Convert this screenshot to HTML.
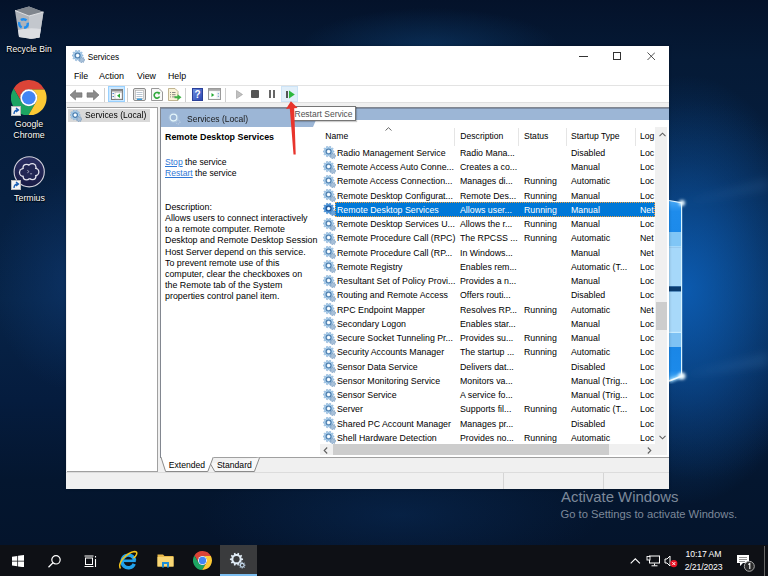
<!DOCTYPE html>
<html><head><meta charset="utf-8">
<style>
*{margin:0;padding:0;box-sizing:border-box}
html,body{width:768px;height:576px;overflow:hidden}
body{position:relative;font-family:"Liberation Sans",sans-serif;font-size:9px;color:#000;
background:
 radial-gradient(ellipse 130px 190px at 700px 290px, rgba(14,80,150,0.45), rgba(14,80,150,0) 100%),
 radial-gradient(ellipse 80px 110px at 72px 280px, rgba(16,62,124,0.5), rgba(16,62,124,0) 100%),
 radial-gradient(ellipse 130px 40px at 430px 48px, rgba(14,62,112,0.55), rgba(14,62,112,0) 100%),
 radial-gradient(ellipse 200px 60px at 400px 515px, rgba(12,55,110,0.35), rgba(12,55,110,0) 100%),
 linear-gradient(180deg,#04122a 0px,#051a36 60px,#061f40 200px,#072448 300px,#051c3e 400px,#04162f 480px,#04142c 545px);
}
.abs{position:absolute}
.t{position:absolute;white-space:nowrap;line-height:1}
.desk{color:#fff;text-align:center;text-shadow:0 0 2px #000,0 1px 1px #000;font-size:9px}
</style></head><body>
<svg width="0" height="0" style="position:absolute"><defs><symbol id="gear" viewBox="0 0 13 13"><path d="M9.82 4.68 L10.97 4.94 L10.97 6.06 L9.82 6.32 L9.50 7.32 L10.27 8.20 L9.62 9.11 L8.53 8.64 L7.68 9.26 L7.79 10.44 L6.73 10.78 L6.13 9.77 L5.07 9.77 L4.47 10.78 L3.41 10.44 L3.52 9.26 L2.67 8.64 L1.58 9.11 L0.93 8.20 L1.70 7.32 L1.38 6.32 L0.23 6.06 L0.23 4.94 L1.38 4.68 L1.70 3.68 L0.93 2.80 L1.58 1.89 L2.67 2.36 L3.52 1.74 L3.41 0.56 L4.47 0.22 L5.07 1.23 L6.13 1.23 L6.73 0.22 L7.79 0.56 L7.68 1.74 L8.53 2.36 L9.62 1.89 L10.27 2.80 L9.50 3.68Z" fill="#a9cfec" stroke="#7aa5cf" stroke-width="0.5"/><path d="M11.92 9.33 L12.77 9.47 L12.77 10.33 L11.92 10.47 L11.60 11.13 L12.02 11.88 L11.35 12.41 L10.72 11.83 L10.00 12.00 L9.68 12.79 L8.84 12.60 L8.90 11.74 L8.32 11.29 L7.50 11.53 L7.13 10.76 L7.83 10.27 L7.83 9.53 L7.13 9.04 L7.50 8.27 L8.32 8.51 L8.90 8.06 L8.84 7.20 L9.68 7.01 L10.00 7.80 L10.72 7.97 L11.35 7.39 L12.02 7.92 L11.60 8.67Z" fill="#a8c0d8" stroke="#6a90b8" stroke-width="0.5"/><circle cx="5.6" cy="5.5" r="2.5" fill="none" stroke="#4a78a8" stroke-width="1.1"/><circle cx="5.6" cy="5.5" r="1.5" fill="#fff"/></symbol><symbol id="gears" viewBox="0 0 13 13"><path d="M9.82 4.68 L10.97 4.94 L10.97 6.06 L9.82 6.32 L9.50 7.32 L10.27 8.20 L9.62 9.11 L8.53 8.64 L7.68 9.26 L7.79 10.44 L6.73 10.78 L6.13 9.77 L5.07 9.77 L4.47 10.78 L3.41 10.44 L3.52 9.26 L2.67 8.64 L1.58 9.11 L0.93 8.20 L1.70 7.32 L1.38 6.32 L0.23 6.06 L0.23 4.94 L1.38 4.68 L1.70 3.68 L0.93 2.80 L1.58 1.89 L2.67 2.36 L3.52 1.74 L3.41 0.56 L4.47 0.22 L5.07 1.23 L6.13 1.23 L6.73 0.22 L7.79 0.56 L7.68 1.74 L8.53 2.36 L9.62 1.89 L10.27 2.80 L9.50 3.68Z" fill="#4d9ae0" stroke="#2f74bd" stroke-width="0.5"/><path d="M11.92 9.33 L12.77 9.47 L12.77 10.33 L11.92 10.47 L11.60 11.13 L12.02 11.88 L11.35 12.41 L10.72 11.83 L10.00 12.00 L9.68 12.79 L8.84 12.60 L8.90 11.74 L8.32 11.29 L7.50 11.53 L7.13 10.76 L7.83 10.27 L7.83 9.53 L7.13 9.04 L7.50 8.27 L8.32 8.51 L8.90 8.06 L8.84 7.20 L9.68 7.01 L10.00 7.80 L10.72 7.97 L11.35 7.39 L12.02 7.92 L11.60 8.67Z" fill="#6aa2d8" stroke="#3c78b8" stroke-width="0.5"/><circle cx="5.6" cy="5.5" r="2.5" fill="none" stroke="#1f4f8f" stroke-width="1.1"/><circle cx="5.6" cy="5.5" r="1.5" fill="#fff"/></symbol><symbol id="geart" viewBox="0 0 18 18"><path d="M12.60 6.21 L14.06 6.52 L14.06 7.88 L12.60 8.19 L12.21 9.40 L13.21 10.51 L12.41 11.61 L11.05 11.00 L10.02 11.75 L10.18 13.23 L8.88 13.65 L8.14 12.36 L6.86 12.36 L6.12 13.65 L4.82 13.23 L4.98 11.75 L3.95 11.00 L2.59 11.61 L1.79 10.51 L2.79 9.40 L2.40 8.19 L0.94 7.88 L0.94 6.52 L2.40 6.21 L2.79 5.00 L1.79 3.89 L2.59 2.79 L3.95 3.40 L4.98 2.65 L4.82 1.17 L6.12 0.75 L6.86 2.04 L8.14 2.04 L8.88 0.75 L10.18 1.17 L10.02 2.65 L11.05 3.40 L12.41 2.79 L13.21 3.89 L12.21 5.00Z" fill="#dfeaf4"/><circle cx="7.5" cy="7.2" r="3.1" fill="#3a3b3d"/><path d="M15.73 12.58 L16.67 12.75 L16.67 13.65 L15.73 13.82 L15.42 14.55 L15.97 15.33 L15.33 15.97 L14.55 15.42 L13.82 15.73 L13.65 16.67 L12.75 16.67 L12.58 15.73 L11.85 15.42 L11.07 15.97 L10.43 15.33 L10.98 14.55 L10.67 13.82 L9.73 13.65 L9.73 12.75 L10.67 12.58 L10.98 11.85 L10.43 11.07 L11.07 10.43 L11.85 10.98 L12.58 10.67 L12.75 9.73 L13.65 9.73 L13.82 10.67 L14.55 10.98 L15.33 10.43 L15.97 11.07 L15.42 11.85Z" fill="#c6dcf0" stroke="#3a3b3d" stroke-width="0.4"/><circle cx="13.2" cy="13.2" r="1.2" fill="#3a3b3d"/></symbol></defs></svg>

<!-- Desktop icons -->
<div id="desktop">
  <!-- recycle bin -->
  <svg class="abs" style="left:13px;top:5px" width="32" height="36" viewBox="0 0 32 36">
    <path d="M2 5.5 L16 1.5 L30.5 7 L26.5 32.5 Q20 34 16 33.5 L6 32 Z" fill="#aeb3ba"/>
    <path d="M16 11 L30.5 7 L26.5 32.5 Q20 34 16 33.5 Z" fill="#c3c7cd"/>
    <path d="M2 5.5 L16 1.5 L30.5 7 L16 11 Z" fill="#80868e"/>
    <path d="M2 5.5 L16 11 L30.5 7" fill="none" stroke="#e6e8ea" stroke-width="0.9"/>
    <path d="M5 25 Q16 22 27.8 24 L26.5 32.5 Q20 34 16 33.5 L6 32 Z" fill="#dcdee2"/>
    <circle cx="10.5" cy="18.5" r="4.3" fill="none" stroke="#1e8ef0" stroke-width="2.4" stroke-dasharray="6 2.5"/>
  </svg>
  <div class="t desk" style="left:5.5px;top:44.5px;width:47px;font-size:8.6px">Recycle Bin</div>

  <!-- chrome -->
  <svg class="abs" style="left:11.4px;top:79.6px" width="35.6" height="35.6" viewBox="0 0 36 36">
    <path d="M18 9.5 L33.87 9.5 A18 18 0 0 0 2.70 8.51 L10.64 22.25 A8.5 8.5 0 0 1 18 9.5 Z" fill="#db4437"/>
    <path d="M10.64 22.25 L2.70 8.51 A18 18 0 0 0 17.43 35.99 L25.36 22.25 A8.5 8.5 0 0 1 10.64 22.25 Z" fill="#1da462"/>
    <path d="M25.36 22.25 L17.43 35.99 A18 18 0 0 0 33.87 9.5 L18 9.5 A8.5 8.5 0 0 1 25.36 22.25 Z" fill="#fcc934"/>
    <circle cx="18" cy="18" r="8.6" fill="#fff"/>
    <circle cx="18" cy="18" r="6.9" fill="#4285f4"/>
  </svg>
  <div class="abs" style="left:11px;top:106px;width:10px;height:10px;background:#f4f4f4;border:1px solid #bbb"></div>
  <svg class="abs" style="left:12px;top:107px" width="8" height="8" viewBox="0 0 8 8"><path d="M2 7 Q2 3 6 3 M4 1 L6.5 3 L4 5" fill="none" stroke="#1a5fb4" stroke-width="1.3"/></svg>
  <div class="t desk" style="left:4px;top:119.7px;width:50px;font-size:8.8px">Google</div>
  <div class="t desk" style="left:4px;top:130.7px;width:50px;font-size:8.8px">Chrome</div>

  <!-- termius -->
  <svg class="abs" style="left:13px;top:155px" width="33" height="33" viewBox="0 0 33 33">
    <defs><linearGradient id="tg" x1="0" y1="0" x2="0" y2="1"><stop offset="0" stop-color="#2a2e62"/><stop offset="1" stop-color="#181b44"/></linearGradient></defs>
    <circle cx="16.2" cy="16.8" r="15.1" fill="url(#tg)" stroke="#d2d2dc" stroke-width="1.1"/>
    <circle cx="10.5" cy="17.5" r="4.60" fill="#e4e4ee"/><circle cx="13.5" cy="12.8" r="4.10" fill="#e4e4ee"/><circle cx="19.2" cy="12.3" r="4.40" fill="#e4e4ee"/><circle cx="22.3" cy="17.0" r="4.20" fill="#e4e4ee"/><circle cx="19.5" cy="21.3" r="4.00" fill="#e4e4ee"/><circle cx="13.5" cy="21.6" r="4.00" fill="#e4e4ee"/><circle cx="16.3" cy="17.0" r="4.70" fill="#e4e4ee"/><circle cx="10.5" cy="17.5" r="3.30" fill="#232754"/><circle cx="13.5" cy="12.8" r="2.80" fill="#232754"/><circle cx="19.2" cy="12.3" r="3.10" fill="#232754"/><circle cx="22.3" cy="17.0" r="2.90" fill="#232754"/><circle cx="19.5" cy="21.3" r="2.70" fill="#232754"/><circle cx="13.5" cy="21.6" r="2.70" fill="#232754"/><circle cx="16.3" cy="17.0" r="3.40" fill="#232754"/>
    <circle cx="16.3" cy="17" r="6.2" fill="#232754"/><ellipse cx="16.3" cy="17" rx="7.5" ry="4.5" fill="#232754"/><path d="M14.3 15.3 L16.1 16.6 L14.3 17.8 M17.1 18.8 L19.1 18.8" stroke="#a8aac0" stroke-width="0.9" fill="none"/>
  </svg>
  <div class="abs" style="left:11px;top:180px;width:10px;height:10px;background:#f4f4f4;border:1px solid #bbb"></div>
  <svg class="abs" style="left:12px;top:181px" width="8" height="8" viewBox="0 0 8 8"><path d="M2 7 Q2 3 6 3 M4 1 L6.5 3 L4 5" fill="none" stroke="#1a5fb4" stroke-width="1.3"/></svg>
  <div class="t desk" style="left:4px;top:193.6px;width:51px;font-size:8.8px">Termius</div>
</div>

<!-- Windows logo light -->
<div class="abs" style="left:662px;top:46px;width:106px;height:499px;background:radial-gradient(ellipse 130px 215px at 24px 244px, rgba(12,96,186,0.85), rgba(12,90,176,0.32) 60%, rgba(12,80,160,0) 100%)"></div>
<div id="logo" class="abs" style="left:600px;top:150px;width:168px;height:280px;overflow:hidden">
  <svg class="abs" style="left:0;top:0" width="168" height="280" viewBox="600 150 168 280">
    <defs>
      <filter id="bl" x="-50%" y="-50%" width="200%" height="200%"><feGaussianBlur stdDeviation="1.6"/></filter>
      <filter id="bl2" x="-50%" y="-50%" width="200%" height="200%"><feGaussianBlur stdDeviation="4"/></filter>
      <linearGradient id="p1" x1="0" y1="0" x2="0" y2="1"><stop offset="0" stop-color="#48a8f6"/><stop offset="0.35" stop-color="#1e8cec"/><stop offset="1" stop-color="#1c8aea"/></linearGradient>
      <linearGradient id="p4" x1="0" y1="0" x2="0" y2="1"><stop offset="0" stop-color="#1a86e6"/><stop offset="0.7" stop-color="#1c8aea"/><stop offset="1" stop-color="#50b0f8"/></linearGradient>
    </defs>
    <!-- rays -->
    <path d="M682 203 L768 178 L768 190 Z" fill="rgba(110,180,240,0.10)" filter="url(#bl2)"/>
    <path d="M682 376 L768 352 L768 366 Z" fill="rgba(110,180,240,0.12)" filter="url(#bl2)"/>
    <!-- panes -->
    <path d="M669 200.5 L682 202.8 L682 232 L669 232 Z" fill="url(#p1)"/>
    <rect x="669" y="232" width="13" height="15" fill="#80c6f6"/>
    <rect x="669" y="246.5" width="13" height="1.2" fill="#c8ecff"/>
    <rect x="669" y="247.5" width="13" height="39" fill="#a6d8fa"/>
    <rect x="669" y="286.5" width="13" height="5" fill="#0a3c70"/>
    <rect x="669" y="291.5" width="13" height="41" fill="#a8d9fa"/>
    <rect x="669" y="331.8" width="13" height="1.2" fill="#c8ecff"/>
    <rect x="669" y="333" width="13" height="14" fill="#7ec2f4"/>
    <path d="M669 347 L682 347 L682 376 L669 381 Z" fill="url(#p4)"/>
    <!-- edges -->
    <path d="M681.6 202.8 V376" stroke="#5fc0ff" stroke-width="3" filter="url(#bl)" opacity="0.8"/>
    <path d="M681.6 202.8 V376" stroke="#d8f4ff" stroke-width="1.2"/>
    <path d="M669 200.5 L682 202.8" stroke="#dff4ff" stroke-width="1.2"/>
    <path d="M669 381 L682 376" stroke="#9fdcff" stroke-width="3.5" filter="url(#bl)"/>
    <path d="M669 381 L682 376" stroke="#f0fbff" stroke-width="1.5"/>
    <circle cx="682" cy="203" r="3" fill="#e8f8ff" filter="url(#bl)"/>
    <circle cx="682" cy="376" r="3.5" fill="#f0fbff" filter="url(#bl)"/>
  </svg>
</div>

<!-- activate windows -->
<div class="t" style="left:561px;top:489.8px;font-size:14.9px;color:#7d899a">Activate Windows</div>
<div class="t" style="left:560.5px;top:508.5px;font-size:11.2px;color:#7d899a">Go to Settings to activate Windows.</div>

<!-- WINDOW -->
<div id="win" class="abs" style="left:66px;top:46px;width:603px;height:443px;background:#fff;box-shadow:0 0 3px rgba(0,0,0,0.25)">
  <!-- title -->
  <svg class="abs" style="left:6px;top:4px" width="13" height="13"><use href="#gear"/></svg>
  <div class="t" style="left:21.7px;top:7.6px;font-size:8.2px;color:#000">Services</div>
  <!-- caption buttons -->
  <div class="abs" style="left:513px;top:10px;width:9px;height:1px;background:#333"></div>
  <div class="abs" style="left:547px;top:6px;width:8px;height:8px;border:1px solid #333"></div>
  <svg class="abs" style="left:580.5px;top:5.8px" width="8.5" height="8.5" viewBox="0 0 9 9"><path d="M0.5 0.5L8.5 8.5M8.5 0.5L0.5 8.5" stroke="#333" stroke-width="0.9"/></svg>

  <!-- menu -->
  <div class="t" style="left:8px;top:26px;font-size:8.8px">File</div>
  <div class="t" style="left:33px;top:26px;font-size:9px">Action</div>
  <div class="t" style="left:71px;top:26px;font-size:8.8px">View</div>
  <div class="t" style="left:102px;top:26px;font-size:8.8px">Help</div>
  <div class="abs" style="left:0;top:39px;width:603px;height:1px;background:#e3e3e3"></div>

  <!-- toolbar -->
  <div id="tb" class="abs" style="left:0;top:40px;width:603px;height:17px;background:#fff"></div>
  <div class="abs" style="left:0;top:56px;width:603px;height:1px;background:#e0e0e0"></div>
  <div class="abs" style="left:0;top:57px;width:603px;height:386px;background:#f0f0f0"></div>

  <!-- toolbar icons (page coords minus 66,46) -->
  <!-- back arrow page 70-82, 90-100 -->
  <svg class="abs" style="left:3px;top:43px" width="14" height="12" viewBox="0 0 14 12"><path d="M1 6 L6.5 1 V3.8 H13 V8.2 H6.5 V11 Z" fill="#8a8a8a" stroke="#6e6e6e" stroke-width="0.6"/></svg>
  <svg class="abs" style="left:20px;top:43px" width="14" height="12" viewBox="0 0 14 12"><path d="M13 6 L7.5 1 V3.8 H1 V8.2 H7.5 V11 Z" fill="#8a8a8a" stroke="#6e6e6e" stroke-width="0.6"/></svg>
  <div class="abs" style="left:38px;top:42px;width:1px;height:14px;background:#cfcfcf"></div>
  <!-- hover-like highlighted button page 108-125, 86-102 -->
  <div class="abs" style="left:42px;top:40px;width:17px;height:16px;background:#cce8ff;border:1px solid #99d1ff"></div>
  <svg class="abs" style="left:45px;top:43px" width="12" height="11" viewBox="0 0 12 11"><rect x="0.5" y="0.5" width="11" height="10" fill="#f4f4f4" stroke="#777"/><rect x="0.5" y="0.5" width="11" height="2" fill="#8a8a8a"/><rect x="4" y="3.5" width="7" height="6.5" fill="#fff" stroke="#aaa" stroke-width="0.5"/><path d="M9 4.5 L6 6.8 L9 9 Z" fill="#22aa33"/><rect x="1.5" y="4" width="1.5" height="1" fill="#5588cc"/><rect x="1.5" y="7" width="1.5" height="1" fill="#5588cc"/></svg>
  <div class="abs" style="left:61px;top:42px;width:1px;height:14px;background:#cfcfcf"></div>
  <!-- icon2 page 133-145 -->
  <svg class="abs" style="left:67px;top:42px" width="13" height="13" viewBox="0 0 13 13"><rect x="0.5" y="0.5" width="12" height="12" rx="1.5" fill="#e6e6e6" stroke="#8c8c8c"/><rect x="2.5" y="2.5" width="8" height="8" fill="#fff" stroke="#aaa" stroke-width="0.6"/><path d="M3.5 4.5H9.5M3.5 6.5H9.5M3.5 8.5H9.5" stroke="#9ab" stroke-width="0.7"/><rect x="4" y="10.5" width="5" height="1.5" fill="#3a9ad9"/></svg>
  <!-- refresh page 152-162 -->
  <svg class="abs" style="left:85px;top:42px" width="12" height="13" viewBox="0 0 12 13"><path d="M0.5 0.5H8L11.5 4V12.5H0.5Z" fill="#f8f8f8" stroke="#999"/><path d="M8.5 8.5 A2.8 2.8 0 1 1 7.8 5.2" fill="none" stroke="#2fa83a" stroke-width="1.6"/><path d="M6.5 3.6 L9.4 4.6 L7.8 7 Z" fill="#2fa83a"/></svg>
  <!-- export page 168-180 -->
  <svg class="abs" style="left:102px;top:42px" width="14" height="13" viewBox="0 0 14 13"><path d="M0.5 0.5H7L10 3.5V12.5H0.5Z" fill="#faf3d8" stroke="#b0a27a" stroke-width="0.8"/><path d="M2 4.5H3M4 4.5H7.5M2 6.7H3M4 6.7H7.5M2 8.9H3M4 8.9H7.5" stroke="#6d6d6d" stroke-width="0.8"/><path d="M6.5 8.3H9.5V6.3L13.5 9.3L9.5 12.3V10.3H6.5Z" fill="#3cb043"/></svg>
  <div class="abs" style="left:119px;top:42px;width:1px;height:14px;background:#cfcfcf"></div>
  <!-- help page 192-202 -->
  <svg class="abs" style="left:126px;top:42px" width="11" height="13" viewBox="0 0 11 13"><defs><linearGradient id="hg" x1="0" y1="0" x2="1" y2="1"><stop offset="0" stop-color="#6d8ee0"/><stop offset="1" stop-color="#2a45b0"/></linearGradient></defs><rect x="0.5" y="0.5" width="10" height="12" fill="url(#hg)" stroke="#2a3f98"/><text x="5.5" y="10.3" font-family="Liberation Sans" font-size="10" font-weight="bold" fill="#fff" text-anchor="middle">?</text></svg>
  <!-- action pane page 208-220 -->
  <svg class="abs" style="left:142px;top:42px" width="13" height="12" viewBox="0 0 13 12"><rect x="0.5" y="0.5" width="12" height="11" fill="#eef0f2" stroke="#9a9a9a"/><rect x="1" y="1" width="11" height="1.8" fill="#a8a8a8"/><rect x="1.5" y="3.5" width="7" height="7" fill="#fff"/><path d="M3.5 5 L6.3 7 L3.5 9 Z" fill="#22aa33"/><path d="M10.3 5.2V6.2M10.3 7.8V8.8" stroke="#5588cc" stroke-width="1"/></svg>
  <div class="abs" style="left:159px;top:42px;width:1px;height:14px;background:#cfcfcf"></div>
  <!-- play page 236-242, 91-98 -->
  <svg class="abs" style="left:170px;top:44px" width="7" height="9" viewBox="0 0 7 9"><path d="M0.5 0.5 L6.5 4.5 L0.5 8.5 Z" fill="#c0c0c0" stroke="#9a9a9a" stroke-width="0.6"/></svg>
  <!-- stop page 251-259 -->
  <div class="abs" style="left:185px;top:44px;width:8px;height:8px;background:#555;border-radius:1px"></div>
  <!-- pause page 269-275 -->
  <div class="abs" style="left:203px;top:44px;width:2px;height:8px;background:#666"></div>
  <div class="abs" style="left:207px;top:44px;width:2px;height:8px;background:#666"></div>
  <!-- restart hovered page 281-298, 86-102 -->
  <div class="abs" style="left:215px;top:40px;width:17px;height:16px;background:#e1effa;border:1px solid #cde4f7"></div>
  <div class="abs" style="left:220px;top:45px;width:2px;height:7px;background:#555"></div>
  <svg class="abs" style="left:223px;top:44px" width="6" height="9" viewBox="0 0 6 9"><path d="M0 0.5 L5.8 4.5 L0 8.5 Z" fill="#2db83d"/></svg>


  <!-- left tree pane -->
  <div class="abs" style="left:1px;top:61px;width:91px;height:365px;background:#fff;border:1px solid #a0a0a0;border-left:none"></div>
  <div class="abs" style="left:2px;top:63px;width:82px;height:13px;background:#d9d9d9"></div>
  <div class="t" style="left:18.8px;top:65.3px;font-size:9.1px;transform:scaleX(0.94);transform-origin:0 0">Services (Local)</div>

  <!-- right pane -->
  <div class="abs" style="left:94px;top:61px;width:509px;height:351px;background:#fff;border-left:1px solid #828790;border-top:1px solid #828790"></div>
  <!-- blue header -->
  <div class="abs" style="left:95px;top:62px;width:508px;height:1px;background:#7d8ea6"></div><div class="abs" style="left:95px;top:63px;width:508px;height:11px;background:#9cb6d6"></div>
  <svg class="abs" style="left:95px;top:74px" width="156" height="7" viewBox="0 0 156 7"><path d="M0 0H155L152 7H0Z" fill="#9cb6d6"/></svg>
  <div class="t" style="left:121.3px;top:67.5px;font-size:9.8px;color:#1a1a1a;transform:scaleX(0.868);transform-origin:0 0">Services (Local)</div>

  <!-- tree gear -->
  <svg class="abs" style="left:4px;top:64px" width="12" height="12"><use href="#gear"/></svg>
  <!-- header gear faded -->
  <svg class="abs" style="left:102px;top:66px" width="14" height="14" viewBox="0 0 14 14"><circle cx="5.5" cy="5.6" r="3.4" fill="none" stroke="#e4f6fb" stroke-width="1.3"/><circle cx="5.5" cy="5.6" r="4.6" fill="none" stroke="#b8cfe4" stroke-width="0.8" stroke-dasharray="1 1"/><circle cx="10" cy="10" r="2" fill="none" stroke="#c4d6e8" stroke-width="1" stroke-dasharray="1 0.8"/></svg>
  <!-- description panel -->
  <div class="t" style="left:99px;top:87px;font-size:8.9px;font-weight:bold">Remote Desktop Services</div>
  <div class="t" style="left:99px;top:111.5px;font-size:8.6px"><span style="color:#2f78d6;text-decoration:underline">Stop</span> the service</div>
  <div class="t" style="left:99px;top:122.5px;font-size:8.6px"><span style="color:#2f78d6;text-decoration:underline">Restart</span> the service</div>
  <div class="abs" style="left:99px;top:156px;font-size:8.9px;line-height:11.13px;white-space:nowrap">Description:<br>Allows users to connect interactively<br>to a remote computer. Remote<br>Desktop and Remote Desktop Session<br>Host Server depend on this service.<br>To prevent remote use of this<br>computer, clear the checkboxes on<br>the Remote tab of the System<br>properties control panel item.</div>

  <!-- list -->
  <div class="abs" style="left:254px;top:82px;width:335px;height:316px;overflow:hidden">
<svg class="abs g" style="left:3.0px;top:18.3px" width="13" height="13"><use href="#gear"/></svg>
<div class="t" style="left:17.0px;top:20.75px;font-size:8.8px;color:#000">Radio Management Service</div>
<div class="t" style="left:140.0px;top:20.75px;font-size:8.8px;color:#000">Radio Mana...</div>
<div class="t" style="left:251.0px;top:20.75px;font-size:8.8px;color:#000">Disabled</div>
<div class="t" style="left:320.0px;top:20.75px;font-size:8.8px;color:#000">Loc</div>
<svg class="abs g" style="left:3.0px;top:32.6px" width="13" height="13"><use href="#gear"/></svg>
<div class="t" style="left:17.0px;top:35.00px;font-size:8.8px;color:#000">Remote Access Auto Conne...</div>
<div class="t" style="left:140.0px;top:35.00px;font-size:8.8px;color:#000">Creates a co...</div>
<div class="t" style="left:251.0px;top:35.00px;font-size:8.8px;color:#000">Manual</div>
<div class="t" style="left:320.0px;top:35.00px;font-size:8.8px;color:#000">Loc</div>
<svg class="abs g" style="left:3.0px;top:46.8px" width="13" height="13"><use href="#gear"/></svg>
<div class="t" style="left:17.0px;top:49.25px;font-size:8.8px;color:#000">Remote Access Connection...</div>
<div class="t" style="left:140.0px;top:49.25px;font-size:8.8px;color:#000">Manages di...</div>
<div class="t" style="left:204.0px;top:49.25px;font-size:8.8px;color:#000">Running</div>
<div class="t" style="left:251.0px;top:49.25px;font-size:8.8px;color:#000">Automatic</div>
<div class="t" style="left:320.0px;top:49.25px;font-size:8.8px;color:#000">Loc</div>
<svg class="abs g" style="left:3.0px;top:61.1px" width="13" height="13"><use href="#gear"/></svg>
<div class="t" style="left:17.0px;top:63.50px;font-size:8.8px;color:#000">Remote Desktop Configurat...</div>
<div class="t" style="left:140.0px;top:63.50px;font-size:8.8px;color:#000">Remote Des...</div>
<div class="t" style="left:204.0px;top:63.50px;font-size:8.8px;color:#000">Running</div>
<div class="t" style="left:251.0px;top:63.50px;font-size:8.8px;color:#000">Manual</div>
<div class="t" style="left:320.0px;top:63.50px;font-size:8.8px;color:#000">Loc</div>
<div class="abs" style="left:15.0px;top:74.1px;width:320.0px;height:14.5px;background:#0078d7;outline:1px dotted #f0a040;outline-offset:-1px"></div>
<svg class="abs g" style="left:3.0px;top:75.3px" width="13" height="13"><use href="#gears"/></svg>
<div class="t" style="left:17.0px;top:77.75px;font-size:8.8px;color:#fff">Remote Desktop Services</div>
<div class="t" style="left:140.0px;top:77.75px;font-size:8.8px;color:#fff">Allows user...</div>
<div class="t" style="left:204.0px;top:77.75px;font-size:8.8px;color:#fff">Running</div>
<div class="t" style="left:251.0px;top:77.75px;font-size:8.8px;color:#fff">Manual</div>
<div class="t" style="left:320.0px;top:77.75px;font-size:8.8px;color:#fff">Net</div>
<svg class="abs g" style="left:3.0px;top:89.6px" width="13" height="13"><use href="#gear"/></svg>
<div class="t" style="left:17.0px;top:92.00px;font-size:8.8px;color:#000">Remote Desktop Services U...</div>
<div class="t" style="left:140.0px;top:92.00px;font-size:8.8px;color:#000">Allows the r...</div>
<div class="t" style="left:204.0px;top:92.00px;font-size:8.8px;color:#000">Running</div>
<div class="t" style="left:251.0px;top:92.00px;font-size:8.8px;color:#000">Manual</div>
<div class="t" style="left:320.0px;top:92.00px;font-size:8.8px;color:#000">Loc</div>
<svg class="abs g" style="left:3.0px;top:103.8px" width="13" height="13"><use href="#gear"/></svg>
<div class="t" style="left:17.0px;top:106.25px;font-size:8.8px;color:#000">Remote Procedure Call (RPC)</div>
<div class="t" style="left:140.0px;top:106.25px;font-size:8.8px;color:#000">The RPCSS ...</div>
<div class="t" style="left:204.0px;top:106.25px;font-size:8.8px;color:#000">Running</div>
<div class="t" style="left:251.0px;top:106.25px;font-size:8.8px;color:#000">Automatic</div>
<div class="t" style="left:320.0px;top:106.25px;font-size:8.8px;color:#000">Net</div>
<svg class="abs g" style="left:3.0px;top:118.1px" width="13" height="13"><use href="#gear"/></svg>
<div class="t" style="left:17.0px;top:120.50px;font-size:8.8px;color:#000">Remote Procedure Call (RP...</div>
<div class="t" style="left:140.0px;top:120.50px;font-size:8.8px;color:#000">In Windows...</div>
<div class="t" style="left:251.0px;top:120.50px;font-size:8.8px;color:#000">Manual</div>
<div class="t" style="left:320.0px;top:120.50px;font-size:8.8px;color:#000">Net</div>
<svg class="abs g" style="left:3.0px;top:132.3px" width="13" height="13"><use href="#gear"/></svg>
<div class="t" style="left:17.0px;top:134.75px;font-size:8.8px;color:#000">Remote Registry</div>
<div class="t" style="left:140.0px;top:134.75px;font-size:8.8px;color:#000">Enables rem...</div>
<div class="t" style="left:251.0px;top:134.75px;font-size:8.8px;color:#000">Automatic (T...</div>
<div class="t" style="left:320.0px;top:134.75px;font-size:8.8px;color:#000">Loc</div>
<svg class="abs g" style="left:3.0px;top:146.6px" width="13" height="13"><use href="#gear"/></svg>
<div class="t" style="left:17.0px;top:149.00px;font-size:8.8px;color:#000">Resultant Set of Policy Provi...</div>
<div class="t" style="left:140.0px;top:149.00px;font-size:8.8px;color:#000">Provides a n...</div>
<div class="t" style="left:251.0px;top:149.00px;font-size:8.8px;color:#000">Manual</div>
<div class="t" style="left:320.0px;top:149.00px;font-size:8.8px;color:#000">Loc</div>
<svg class="abs g" style="left:3.0px;top:160.8px" width="13" height="13"><use href="#gear"/></svg>
<div class="t" style="left:17.0px;top:163.25px;font-size:8.8px;color:#000">Routing and Remote Access</div>
<div class="t" style="left:140.0px;top:163.25px;font-size:8.8px;color:#000">Offers routi...</div>
<div class="t" style="left:251.0px;top:163.25px;font-size:8.8px;color:#000">Disabled</div>
<div class="t" style="left:320.0px;top:163.25px;font-size:8.8px;color:#000">Loc</div>
<svg class="abs g" style="left:3.0px;top:175.1px" width="13" height="13"><use href="#gear"/></svg>
<div class="t" style="left:17.0px;top:177.50px;font-size:8.8px;color:#000">RPC Endpoint Mapper</div>
<div class="t" style="left:140.0px;top:177.50px;font-size:8.8px;color:#000">Resolves RP...</div>
<div class="t" style="left:204.0px;top:177.50px;font-size:8.8px;color:#000">Running</div>
<div class="t" style="left:251.0px;top:177.50px;font-size:8.8px;color:#000">Automatic</div>
<div class="t" style="left:320.0px;top:177.50px;font-size:8.8px;color:#000">Net</div>
<svg class="abs g" style="left:3.0px;top:189.3px" width="13" height="13"><use href="#gear"/></svg>
<div class="t" style="left:17.0px;top:191.75px;font-size:8.8px;color:#000">Secondary Logon</div>
<div class="t" style="left:140.0px;top:191.75px;font-size:8.8px;color:#000">Enables star...</div>
<div class="t" style="left:251.0px;top:191.75px;font-size:8.8px;color:#000">Manual</div>
<div class="t" style="left:320.0px;top:191.75px;font-size:8.8px;color:#000">Loc</div>
<svg class="abs g" style="left:3.0px;top:203.6px" width="13" height="13"><use href="#gear"/></svg>
<div class="t" style="left:17.0px;top:206.00px;font-size:8.8px;color:#000">Secure Socket Tunneling Pr...</div>
<div class="t" style="left:140.0px;top:206.00px;font-size:8.8px;color:#000">Provides su...</div>
<div class="t" style="left:204.0px;top:206.00px;font-size:8.8px;color:#000">Running</div>
<div class="t" style="left:251.0px;top:206.00px;font-size:8.8px;color:#000">Manual</div>
<div class="t" style="left:320.0px;top:206.00px;font-size:8.8px;color:#000">Loc</div>
<svg class="abs g" style="left:3.0px;top:217.8px" width="13" height="13"><use href="#gear"/></svg>
<div class="t" style="left:17.0px;top:220.25px;font-size:8.8px;color:#000">Security Accounts Manager</div>
<div class="t" style="left:140.0px;top:220.25px;font-size:8.8px;color:#000">The startup ...</div>
<div class="t" style="left:204.0px;top:220.25px;font-size:8.8px;color:#000">Running</div>
<div class="t" style="left:251.0px;top:220.25px;font-size:8.8px;color:#000">Automatic</div>
<div class="t" style="left:320.0px;top:220.25px;font-size:8.8px;color:#000">Loc</div>
<svg class="abs g" style="left:3.0px;top:232.1px" width="13" height="13"><use href="#gear"/></svg>
<div class="t" style="left:17.0px;top:234.50px;font-size:8.8px;color:#000">Sensor Data Service</div>
<div class="t" style="left:140.0px;top:234.50px;font-size:8.8px;color:#000">Delivers dat...</div>
<div class="t" style="left:251.0px;top:234.50px;font-size:8.8px;color:#000">Disabled</div>
<div class="t" style="left:320.0px;top:234.50px;font-size:8.8px;color:#000">Loc</div>
<svg class="abs g" style="left:3.0px;top:246.3px" width="13" height="13"><use href="#gear"/></svg>
<div class="t" style="left:17.0px;top:248.75px;font-size:8.8px;color:#000">Sensor Monitoring Service</div>
<div class="t" style="left:140.0px;top:248.75px;font-size:8.8px;color:#000">Monitors va...</div>
<div class="t" style="left:251.0px;top:248.75px;font-size:8.8px;color:#000">Manual (Trig...</div>
<div class="t" style="left:320.0px;top:248.75px;font-size:8.8px;color:#000">Loc</div>
<svg class="abs g" style="left:3.0px;top:260.6px" width="13" height="13"><use href="#gear"/></svg>
<div class="t" style="left:17.0px;top:263.00px;font-size:8.8px;color:#000">Sensor Service</div>
<div class="t" style="left:140.0px;top:263.00px;font-size:8.8px;color:#000">A service fo...</div>
<div class="t" style="left:251.0px;top:263.00px;font-size:8.8px;color:#000">Manual (Trig...</div>
<div class="t" style="left:320.0px;top:263.00px;font-size:8.8px;color:#000">Loc</div>
<svg class="abs g" style="left:3.0px;top:274.8px" width="13" height="13"><use href="#gear"/></svg>
<div class="t" style="left:17.0px;top:277.25px;font-size:8.8px;color:#000">Server</div>
<div class="t" style="left:140.0px;top:277.25px;font-size:8.8px;color:#000">Supports fil...</div>
<div class="t" style="left:204.0px;top:277.25px;font-size:8.8px;color:#000">Running</div>
<div class="t" style="left:251.0px;top:277.25px;font-size:8.8px;color:#000">Automatic (T...</div>
<div class="t" style="left:320.0px;top:277.25px;font-size:8.8px;color:#000">Loc</div>
<svg class="abs g" style="left:3.0px;top:289.1px" width="13" height="13"><use href="#gear"/></svg>
<div class="t" style="left:17.0px;top:291.50px;font-size:8.8px;color:#000">Shared PC Account Manager</div>
<div class="t" style="left:140.0px;top:291.50px;font-size:8.8px;color:#000">Manages pr...</div>
<div class="t" style="left:251.0px;top:291.50px;font-size:8.8px;color:#000">Disabled</div>
<div class="t" style="left:320.0px;top:291.50px;font-size:8.8px;color:#000">Loc</div>
<svg class="abs g" style="left:3.0px;top:303.3px" width="13" height="13"><use href="#gear"/></svg>
<div class="t" style="left:17.0px;top:305.75px;font-size:8.8px;color:#000">Shell Hardware Detection</div>
<div class="t" style="left:140.0px;top:305.75px;font-size:8.8px;color:#000">Provides no...</div>
<div class="t" style="left:204.0px;top:305.75px;font-size:8.8px;color:#000">Running</div>
<div class="t" style="left:251.0px;top:305.75px;font-size:8.8px;color:#000">Automatic</div>
<div class="t" style="left:320.0px;top:305.75px;font-size:8.8px;color:#000">Loc</div>
</div>
<div class="t" style="left:259.3px;top:86.32px;font-size:8.6px">Name</div>
<div class="t" style="left:394.3px;top:86.32px;font-size:8.6px">Description</div>
<div class="t" style="left:458.0px;top:86.32px;font-size:8.6px">Status</div>
<div class="t" style="left:505.0px;top:86.32px;font-size:8.6px">Startup Type</div>
<div class="t" style="left:574.0px;top:86.32px;font-size:8.6px">Log</div>
<div class="abs" style="left:388px;top:82px;width:1px;height:18px;background:#e5e5e5"></div>
<div class="abs" style="left:452px;top:82px;width:1px;height:18px;background:#e5e5e5"></div>
<div class="abs" style="left:500px;top:82px;width:1px;height:18px;background:#e5e5e5"></div>
<div class="abs" style="left:569px;top:82px;width:1px;height:18px;background:#e5e5e5"></div>
<svg class="abs" style="left:318.5px;top:80.5px" width="7" height="4"><path d="M0.5 3.5L3.5 0.7L6.5 3.5" fill="none" stroke="#555" stroke-width="0.9"/></svg>

  <!-- vertical scrollbar (page 656-667, 127.5-444) -->
  <div class="abs" style="left:589px;top:81px;width:12px;height:317px;background:#f0f0f0"></div>
  <div class="abs" style="left:590px;top:256px;width:11px;height:28px;background:#cdcdcd"></div>
  <svg class="abs" style="left:592.5px;top:86px" width="7" height="5"><path d="M0.5 4.2L3.5 1.2L6.5 4.2" fill="none" stroke="#606060" stroke-width="1.1"/></svg>
  <svg class="abs" style="left:592.5px;top:389px" width="7" height="5"><path d="M0.5 0.8L3.5 3.8L6.5 0.8" fill="none" stroke="#606060" stroke-width="1.1"/></svg>
  <!-- horizontal scrollbar (page 320-667, 444-455) -->
  <div class="abs" style="left:254px;top:398px;width:347px;height:11px;background:#f0f0f0"></div>
  <div class="abs" style="left:267px;top:398px;width:276px;height:11px;background:#cdcdcd"></div>
  <svg class="abs" style="left:257px;top:400.5px" width="5" height="7"><path d="M4.2 0.5L1.2 3.5L4.2 6.5" fill="none" stroke="#606060" stroke-width="1.1"/></svg>
  <svg class="abs" style="left:580.5px;top:400.5px" width="5" height="7"><path d="M0.8 0.5L3.8 3.5L0.8 6.5" fill="none" stroke="#606060" stroke-width="1.1"/></svg>
  <!-- pane bottom border -->
  <!-- tabs -->
  <svg class="abs" style="left:94px;top:411px" width="509" height="16" viewBox="0 0 509 16">
    <path d="M54 0.5 H509" stroke="#a0a0a0" stroke-width="1"/>
    <path d="M50.2 6.5 L54.8 14.5 L94.4 14.5 L99.6 0.5" fill="#f7f7f7" stroke="#8a8a8a" stroke-width="1"/>
    <path d="M0.6 -1 L5.6 14.5 L47.8 14.5 L53.7 -1" fill="#fff" stroke="#8a8a8a" stroke-width="1"/>
  </svg>
  <div class="t" style="left:102.8px;top:414.6px;font-size:8.6px">Extended</div>
  <div class="t" style="left:150.9px;top:414.6px;font-size:8.6px">Standard</div>

  <!-- status bar -->
  <div class="abs" style="left:0;top:426px;width:603px;height:1px;background:#dcdcdc"></div>
  <div class="abs" style="left:437px;top:427px;width:1px;height:16px;background:#d5d5d5"></div>
  <div class="abs" style="left:537px;top:427px;width:1px;height:16px;background:#d5d5d5"></div>
</div>


<!-- tooltip -->
<div class="abs" style="left:290.5px;top:106px;width:65.5px;height:15px;background:#fff;border:1px solid #767676;box-shadow:1px 1px 1px rgba(0,0,0,0.2)"></div>
<div class="t" style="left:294.5px;top:109.6px;font-size:8.5px;color:#505050">Restart Service</div>
<!-- red arrow -->
<svg class="abs" style="left:280px;top:98px" width="22" height="60" viewBox="0 0 22 60">
  <path d="M10.9 3.3 L17.6 10 L14.2 10.3 L15.7 56.5 L13.5 56.5 L9.8 10.6 L6 10.9 Z" fill="#e8342c"/>
</svg>

<!-- TASKBAR -->
<div id="taskbar" class="abs" style="left:0;top:545px;width:768px;height:31px;background:#0e1015">
  <!-- start -->
  <svg class="abs" style="left:12px;top:10px" width="12.3" height="12.3" viewBox="0 0 13 13"><path d="M0 1.8L5.6 1V6.1H0Z M6.4 0.9L13 0V6.1H6.4Z M0 6.9H5.6V12L0 11.2Z M6.4 6.9H13V13L6.4 12.1Z" fill="#fff"/></svg>
  <!-- search -->
  <svg class="abs" style="left:47px;top:9px" width="15" height="15" viewBox="0 0 15 15"><circle cx="9" cy="5.8" r="4.2" fill="none" stroke="#fff" stroke-width="1.2"/><path d="M6 8.8L1.5 13.3" stroke="#fff" stroke-width="1.3"/></svg>
  <!-- task view -->
  <svg class="abs" style="left:84px;top:10px" width="13" height="13" viewBox="0 0 13 13"><path d="M0.5 1H9.5M0.5 11.5H9.5" stroke="#fff" stroke-width="1"/><rect x="1.5" y="3" width="7" height="6.5" fill="none" stroke="#fff" stroke-width="1"/><path d="M11.5 1V2.5M11.5 4V12" stroke="#fff" stroke-width="1.1"/></svg>
  <!-- IE -->
  <svg class="abs" style="left:118px;top:5px" width="20" height="21" viewBox="0 0 20 21">
    <path d="M16.2 13.8 A6.3 6.3 0 1 1 16.6 10.6" fill="none" stroke="#22a2ea" stroke-width="3.4"/>
    <path d="M5 10.8 H17.8" stroke="#22a2ea" stroke-width="2.6"/>
    <path d="M2.5 18.5 Q0 15 5 8.5 Q10.5 2.5 16.5 1.5 Q19.5 1.5 18.5 4.5 Q17.8 6.5 15.5 8" fill="none" stroke="#f2c21a" stroke-width="1.5"/>
  </svg>
  <!-- folder -->
  <svg class="abs" style="left:157px;top:8px" width="17" height="15" viewBox="0 0 17 15"><path d="M0.5 1.5H6L7.5 3H16.5V13.5H0.5Z" fill="#e8b94a"/><rect x="0.5" y="4" width="16" height="9.5" fill="#f8d776"/><path d="M5 9H12V14.5H10V11H7V14.5H5Z" fill="#1e8fd8"/></svg>
  <!-- chrome -->
  <svg class="abs" style="left:193px;top:6px" width="19" height="19" viewBox="0 0 36 36">
    <path d="M18 9.5 L33.87 9.5 A18 18 0 0 0 2.70 8.51 L10.64 22.25 A8.5 8.5 0 0 1 18 9.5 Z" fill="#db4437"/>
    <path d="M10.64 22.25 L2.70 8.51 A18 18 0 0 0 17.43 35.99 L25.36 22.25 A8.5 8.5 0 0 1 10.64 22.25 Z" fill="#1da462"/>
    <path d="M25.36 22.25 L17.43 35.99 A18 18 0 0 0 33.87 9.5 L18 9.5 A8.5 8.5 0 0 1 25.36 22.25 Z" fill="#fcc934"/>
    <circle cx="18" cy="18" r="8.6" fill="#fff"/>
    <circle cx="18" cy="18" r="6.9" fill="#4285f4"/>
  </svg>
  <!-- active services -->
  <div class="abs" style="left:220px;top:0;width:37px;height:31px;background:#3a3b3d"></div>
  <div class="abs" style="left:220px;top:29px;width:37px;height:2px;background:#7bbdf0"></div>
  <svg class="abs" style="left:229px;top:7px" width="18" height="18"><use href="#geart"/></svg>
  <!-- tray -->
  <svg class="abs" style="left:630px;top:13px" width="11" height="6" viewBox="0 0 11 6"><path d="M0.7 5.3L5.3 0.8L9.9 5.3" fill="none" stroke="#fff" stroke-width="1.1"/></svg>
  <svg class="abs" style="left:646px;top:10px" width="15" height="12" viewBox="0 0 15 12"><rect x="3.5" y="1" width="10" height="7" fill="none" stroke="#fff" stroke-width="1"/><rect x="1" y="1.5" width="3" height="3.5" fill="#0e1015" stroke="#fff" stroke-width="0.9"/><path d="M8.5 8.5V10.5M5.5 10.8H11.5" stroke="#fff" stroke-width="1"/></svg>
  <svg class="abs" style="left:664px;top:10px" width="15" height="14" viewBox="0 0 15 14"><path d="M1 4H3L6 1V11L3 8H1Z" fill="none" stroke="#fff" stroke-width="1"/><circle cx="9.8" cy="8.6" r="3.6" fill="#e81123"/><path d="M8.3 7.1L11.3 10.1M11.3 7.1L8.3 10.1" stroke="#fff" stroke-width="1"/></svg>
  <div class="t" style="left:685.5px;top:5.2px;font-size:8.7px;color:#fff;letter-spacing:-0.1px">10:17 AM</div>
  <div class="t" style="left:684.8px;top:18.2px;font-size:8.7px;color:#fff;letter-spacing:-0.1px">2/21/2023</div>
  <svg class="abs" style="left:736px;top:9px" width="20" height="19" viewBox="0 0 20 19"><path d="M1 1H13V9H7L4 12V9H1Z" fill="#fff"/><path d="M3 3.5H11M3 5.5H11M3 7.5H9" stroke="#777" stroke-width="0.8"/><circle cx="13.3" cy="12.3" r="5" fill="#2b2b2b" stroke="#aaa" stroke-width="1"/><path d="M12.3 10.5L13.8 9.5V15" stroke="#fff" stroke-width="1.1" fill="none"/></svg>
  <div class="abs" style="left:764px;top:1px;width:1px;height:30px;background:#666"></div>
</div>


</body></html>
